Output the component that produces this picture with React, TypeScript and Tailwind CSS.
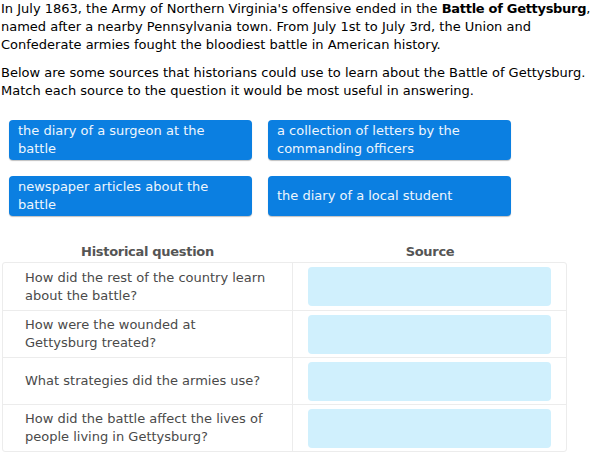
const sources = [
  'the diary of a surgeon at the battle',
  'a collection of letters by the commanding officers',
  'newspaper articles about the battle',
  'the diary of a local student',
]

const questions = [
  'How did the rest of the country learn about the battle?',
  'How were the wounded at Gettysburg treated?',
  'What strategies did the armies use?',
  'How did the battle affect the lives of people living in Gettysburg?',
]

export default function App() {
  return (
    <div className="w-[600px] h-[456px] overflow-hidden bg-white font-['DejaVu_Sans',Verdana,sans-serif] text-[13px] leading-[18px] text-black">
      <p className="pl-[1px]">
        In July 1863, the Army of Northern Virginia's offensive ended in the{' '}
        <b className="tracking-[-0.3px]">Battle of Gettysburg</b>, named after a nearby
        Pennsylvania town. From July 1st to July 3rd, the Union and Confederate armies fought the
        bloodiest battle in American history.
      </p>
      <p className="pl-[1px] mt-[10px]">
        Below are some sources that historians could use to learn about the Battle of Gettysburg.
        Match each source to the question it would be most useful in answering.
      </p>

      <div className="grid grid-cols-[243px_243px] gap-x-4 gap-y-4 pl-[9px] mt-[20px]">
        {sources.map((s) => (
          <div
            key={s}
            className="h-[40px] flex items-center px-[9px] rounded-[4px] bg-[#0b7fe1] text-[#eef6fd] shadow-[0_1px_1px_rgba(0,0,0,0.25)]"
          >
            {s}
          </div>
        ))}
      </div>

      <div className="ml-[2px] w-[565px] mt-[27px]">
        <div className="flex font-bold tracking-[-0.3px] text-[#555]">
          <div className="w-[291px] text-center">Historical question</div>
          <div className="flex-1 text-center">Source</div>
        </div>
        <div className="mt-[1px] border border-[#ececec] rounded-[3px]">
          {questions.map((q, i) => (
            <div key={q} className={`flex h-[47px] ${i > 0 ? 'border-t border-[#ececec]' : ''}`}>
              <div className="w-[290px] flex items-center pl-[22px] pr-[22px] text-[#4a4a4a] border-r border-[#ececec]">
                {q}
              </div>
              <div className="flex-1 flex items-center justify-center">
                <div className="w-[243px] h-[39px] rounded-[4px] bg-[#d0f0fd]" />
              </div>
            </div>
          ))}
        </div>
      </div>
    </div>
  )
}
